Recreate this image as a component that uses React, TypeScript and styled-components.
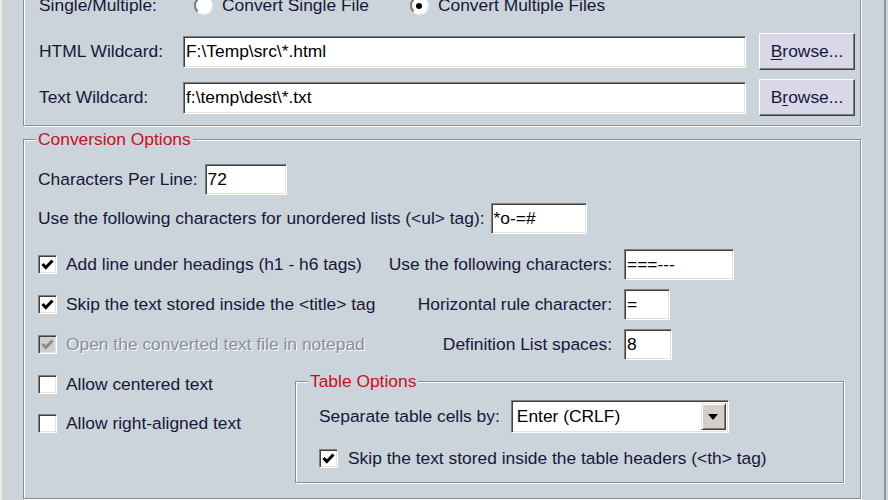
import React from "react";
import styled, { createGlobalStyle } from "styled-components";

const BG = "#cbd3db";
const TEXT = "#17173a";
const RED = "#c8101e";

const Global = createGlobalStyle`
  html, body { margin: 0; padding: 0; background: ${BG}; }
  body {
    font-family: "Liberation Sans", Arial, sans-serif;
    font-size: 17.4px;
    color: ${TEXT};
  }
`;

const Screen = styled.div`
  width: 888px;
  height: 500px;
  overflow: hidden;
  background: ${BG};
`;

const Page = styled.div`
  width: 886px;
  height: 500px;
  box-sizing: border-box;
  border-left: 2px solid #ece9e1;
  border-right: 2px solid #8f959d;
  padding: 0 23px 0 21px;
  display: flex;
  flex-direction: column;
`;

const Group = styled.div<{ $pad: string; $mt: number; $h?: number }>`
  position: relative;
  box-sizing: border-box;
  border: 1px solid #878d95;
  box-shadow: inset 1px 1px 0 #fff, 1px 1px 0 #fff;
  padding: ${(p) => p.$pad};
  margin-top: ${(p) => p.$mt}px;
  ${(p) => (p.$h ? `height: ${p.$h}px;` : "")}
  display: flex;
  flex-direction: column;
`;

const Legend = styled.span`
  position: absolute;
  top: -11px;
  left: 12px;
  padding: 0 2px;
  line-height: 20px;
  background: ${BG};
  color: ${RED};
`;

const TopRows = styled.div`
  display: flex;
  flex-direction: column;
  gap: 9px;
`;

const TopRow = styled.div`
  display: flex;
  align-items: center;
  height: 37px;
`;

const RowLabel = styled.span<{ $w?: number }>`
  white-space: nowrap;
  ${(p) => (p.$w ? `width: ${p.$w}px; flex: none;` : "")}
`;

const TextBox = styled.input<{ $w?: number; $h?: number }>`
  box-sizing: border-box;
  ${(p) => (p.$w ? `width: ${p.$w}px; flex: none;` : "flex: 1; min-width: 0;")}
  height: ${(p) => p.$h ?? 32}px;
  margin: 0;
  padding: 0 2px;
  font: inherit;
  color: #000;
  background: #fff;
  outline: none;
  border-top: 1px solid #808080;
  border-left: 1px solid #808080;
  border-bottom: 1px solid #fff;
  border-right: 1px solid #fff;
  box-shadow: inset 1px 1px 0 #404040, inset -1px -1px 0 #e4e2dc;
`;

const Button = styled.button`
  box-sizing: border-box;
  width: 96px;
  height: 37px;
  margin: 0 0 0 13px;
  padding: 0;
  font: inherit;
  color: ${TEXT};
  background: #d8d8e8;
  border-top: 1px solid #fff;
  border-left: 1px solid #fff;
  border-bottom: 1px solid #404040;
  border-right: 1px solid #404040;
  box-shadow: inset -1px -1px 0 #808080;
  flex: none;
`;

const Radios = styled.div`
  display: flex;
  align-items: center;
  margin-left: 11px;
  gap: 41px;
`;

const RadioOption = styled.span`
  display: inline-flex;
  align-items: center;
  gap: 9px;
`;

const RadioCircle = styled.span<{ $on?: boolean }>`
  box-sizing: border-box;
  width: 19px;
  height: 19px;
  border-radius: 50%;
  border: 2px solid;
  border-color: #7a7a7a #f4f4f4 #f4f4f4 #7a7a7a;
  background: #fff;
  display: inline-flex;
  align-items: center;
  justify-content: center;
  &::after {
    content: "";
    width: 6px;
    height: 6px;
    border-radius: 50%;
    background: ${(p) => (p.$on ? "#000" : "transparent")};
  }
`;

const Stack = styled.div<{ $mt?: number }>`
  display: flex;
  align-items: center;
  margin-top: ${(p) => p.$mt ?? 0}px;
`;

const InlineRow = styled.div<{ $gap: number; $mt?: number; $h?: number }>`
  display: flex;
  align-items: center;
  gap: ${(p) => p.$gap}px;
  margin-top: ${(p) => p.$mt ?? 0}px;
  height: ${(p) => p.$h ?? 31}px;
`;

const OptionGrid = styled.div`
  display: grid;
  grid-template-columns: 1fr max-content 221px;
  grid-auto-rows: 31px;
  column-gap: 12px;
  row-gap: 9px;
  margin-top: 15px;
  align-items: center;
`;

const RightLabel = styled.span`
  justify-self: end;
  white-space: nowrap;
`;

const CheckRow = styled.label<{ $gap?: number }>`
  display: flex;
  align-items: center;
  gap: ${(p) => p.$gap ?? 9}px;
  white-space: nowrap;
  height: 20px;
`;

const CheckText = styled.span<{ $disabled?: boolean }>`
  color: ${(p) => (p.$disabled ? "#8a8e96" : TEXT)};
  text-shadow: ${(p) => (p.$disabled ? "1px 1px 0 #fff" : "none")};
`;

const Box = styled.span<{ $disabled?: boolean }>`
  box-sizing: border-box;
  width: 19px;
  height: 19px;
  flex: none;
  border-top: 1px solid #808080;
  border-left: 1px solid #808080;
  border-bottom: 1px solid #fff;
  border-right: 1px solid #fff;
  box-shadow: inset 1px 1px 0 #404040, inset -1px -1px 0 #e4e2dc;
  background: ${(p) => (p.$disabled ? "#d0d0d0" : "#fff")};
  display: inline-flex;
  align-items: center;
  justify-content: center;
`;

const BottomArea = styled.div`
  display: grid;
  grid-template-columns: 257px 549px;
  margin-top: 14px;
  align-items: start;
`;

const LeftChecks = styled.div`
  display: flex;
  flex-direction: column;
  gap: 19px;
`;

const SelectBox = styled.div`
  box-sizing: border-box;
  width: 218px;
  height: 33px;
  display: flex;
  align-items: stretch;
  background: #fff;
  color: #000;
  border-top: 1px solid #808080;
  border-left: 1px solid #808080;
  border-bottom: 1px solid #fff;
  border-right: 1px solid #fff;
  box-shadow: inset 1px 1px 0 #404040, inset -1px -1px 0 #e4e2dc;
  padding: 2px;
`;

const SelectValue = styled.span`
  flex: 1;
  display: flex;
  align-items: center;
  padding-left: 3px;
`;

const DropButton = styled.span`
  box-sizing: border-box;
  width: 25px;
  flex: none;
  background: #d4d0c8;
  border-top: 1px solid #e8e6e0;
  border-left: 1px solid #e8e6e0;
  border-bottom: 1px solid #404040;
  border-right: 1px solid #404040;
  box-shadow: inset 1px 1px 0 #fff, inset -1px -1px 0 #808080;
  display: flex;
  align-items: center;
  justify-content: center;
`;

const U = styled.span`
  text-decoration: underline;
  text-underline-offset: 2px;
`;

function Check({ disabled }: { disabled?: boolean }) {
  return (
    <svg width="15" height="15" viewBox="0 0 15 15">
      <path
        d="M2.5 7 L5.8 10.6 L12.5 3.5"
        fill="none"
        stroke={disabled ? "#8a8a8a" : "#000"}
        strokeWidth="3"
      />
    </svg>
  );
}

function CheckBox({ checked, disabled }: { checked?: boolean; disabled?: boolean }) {
  return <Box $disabled={disabled}>{checked && <Check disabled={disabled} />}</Box>;
}

export default function App() {
  return (
    <Screen>
      <Global />
      <Page>
        <Group $pad="10px 5px 9px 15px" $mt={-24}>
          <TopRows>
            <TopRow>
              <RowLabel $w={144}>Single/Multiple:</RowLabel>
              <Radios>
                <RadioOption>
                  <RadioCircle />
                  Convert Single File
                </RadioOption>
                <RadioOption>
                  <RadioCircle $on />
                  Convert Multiple Files
                </RadioOption>
              </Radios>
            </TopRow>
            <TopRow>
              <RowLabel $w={144}>HTML Wildcard:</RowLabel>
              <TextBox readOnly value={"F:\\Temp\\src\\*.html"} />
              <Button>
                <U>B</U>rowse...
              </Button>
            </TopRow>
            <TopRow>
              <RowLabel $w={144}>Text Wildcard:</RowLabel>
              <TextBox readOnly value={"f:\\temp\\dest\\*.txt"} />
              <Button>
                B<U>r</U>owse...
              </Button>
            </TopRow>
          </TopRows>
        </Group>

        <Group $pad="24px 15px 0 14px" $mt={13} $h={360}>
          <Legend>Conversion Options</Legend>
          <InlineRow $gap={7}>
            <RowLabel>Characters Per Line:</RowLabel>
            <TextBox readOnly value="72" $w={82} $h={31} />
          </InlineRow>
          <InlineRow $gap={6} $mt={8}>
            <RowLabel>Use the following characters for unordered lists (&lt;ul&gt; tag):</RowLabel>
            <TextBox readOnly value="*o-=#" $w={96} $h={31} />
          </InlineRow>

          <OptionGrid>
            <CheckRow>
              <CheckBox checked />
              <CheckText>Add line under headings (h1 - h6 tags)</CheckText>
            </CheckRow>
            <RightLabel>Use the following characters:</RightLabel>
            <Stack>
              <TextBox readOnly value="===---" $w={110} $h={31} />
            </Stack>

            <CheckRow>
              <CheckBox checked />
              <CheckText>Skip the text stored inside the &lt;title&gt; tag</CheckText>
            </CheckRow>
            <RightLabel>Horizontal rule character:</RightLabel>
            <Stack>
              <TextBox readOnly value="=" $w={46} $h={31} />
            </Stack>

            <CheckRow>
              <CheckBox checked disabled />
              <CheckText $disabled>Open the converted text file in notepad</CheckText>
            </CheckRow>
            <RightLabel>Definition List spaces:</RightLabel>
            <Stack>
              <TextBox readOnly value="8" $w={48} $h={31} />
            </Stack>
          </OptionGrid>

          <BottomArea>
            <LeftChecks>
              <CheckRow>
                <CheckBox />
                <CheckText>Allow centered text</CheckText>
              </CheckRow>
              <CheckRow>
                <CheckBox />
                <CheckText>Allow right-aligned text</CheckText>
              </CheckRow>
            </LeftChecks>

            <Group $pad="18px 10px 14px 23px" $mt={7}>
              <Legend>Table Options</Legend>
              <InlineRow $gap={11} $h={33}>
                <RowLabel>Separate table cells by:</RowLabel>
                <SelectBox>
                  <SelectValue>Enter (CRLF)</SelectValue>
                  <DropButton>
                    <svg width="10" height="6" viewBox="0 0 10 6">
                      <path d="M0 0 H10 L5 6 Z" fill="#000" />
                    </svg>
                  </DropButton>
                </SelectBox>
              </InlineRow>
              <Stack $mt={15}>
                <CheckRow $gap={10}>
                  <CheckBox checked />
                  <CheckText>Skip the text stored inside the table headers (&lt;th&gt; tag)</CheckText>
                </CheckRow>
              </Stack>
            </Group>
          </BottomArea>
        </Group>
      </Page>
    </Screen>
  );
}
